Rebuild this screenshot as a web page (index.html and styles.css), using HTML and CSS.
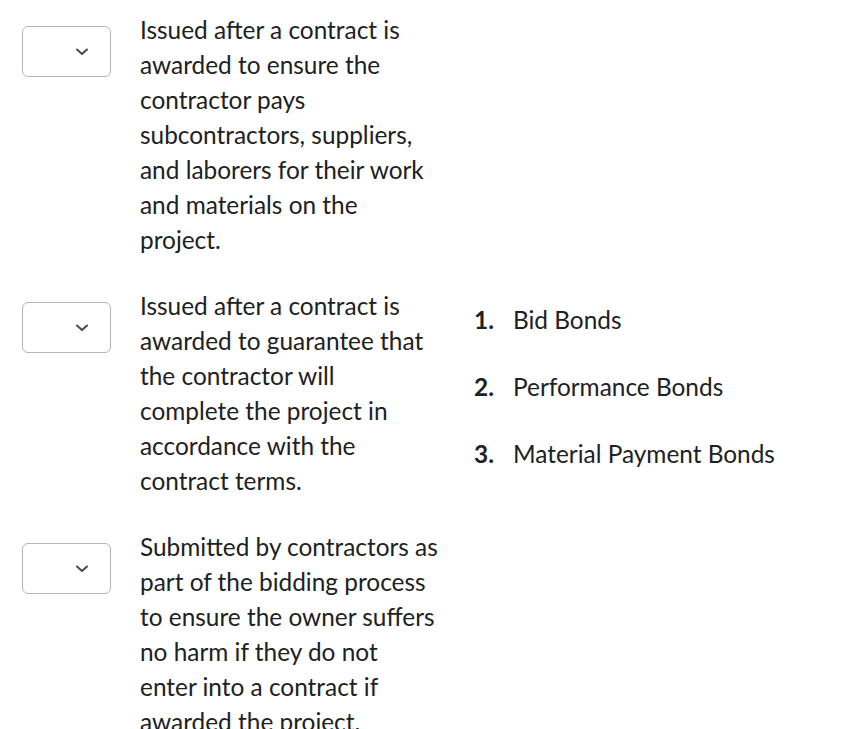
FILE: index.html
```html
<!DOCTYPE html>
<html>
<head>
<meta charset="utf-8">
<link rel="stylesheet" href="styles.css">
</head>
<body>
<div class="question">
  <div class="pairs">
    <div class="pair">
      <div class="select"><svg class="chev" width="12" height="8" viewBox="0 0 12 8"><path d="M1 1.5 L6 6 L11 1.5" fill="none" stroke="#494c4e" stroke-width="2" stroke-linecap="round" stroke-linejoin="round"/></svg></div>
      <p class="prompt">Issued after a contract is awarded to ensure the contractor pays subcontractors, suppliers, and laborers for their work and materials on the project.</p>
    </div>
    <div class="pair">
      <div class="select"><svg class="chev" width="12" height="8" viewBox="0 0 12 8"><path d="M1 1.5 L6 6 L11 1.5" fill="none" stroke="#494c4e" stroke-width="2" stroke-linecap="round" stroke-linejoin="round"/></svg></div>
      <p class="prompt">Issued after a contract is awarded to guarantee that the contractor will complete the project in accordance with the contract terms.</p>
    </div>
    <div class="pair">
      <div class="select"><svg class="chev" width="12" height="8" viewBox="0 0 12 8"><path d="M1 1.5 L6 6 L11 1.5" fill="none" stroke="#494c4e" stroke-width="2" stroke-linecap="round" stroke-linejoin="round"/></svg></div>
      <p class="prompt">Submitted by contractors as part of the bidding process to ensure the owner suffers no harm if they do not enter into a contract if awarded the project.</p>
    </div>
  </div>
  <ol class="choices">
    <li><span class="num">1.</span><span>Bid Bonds</span></li>
    <li><span class="num">2.</span><span>Performance Bonds</span></li>
    <li><span class="num">3.</span><span>Material Payment Bonds</span></li>
  </ol>
</div>
</body>
</html>
```
FILE: styles.css
```css
html, body {
  margin: 0;
  padding: 0;
  background: #ffffff;
}
body {
  font-family: Lato, "Open Sans", sans-serif;
  color: #202122;
  font-size: 24.4px;
}
.question {
  display: flex;
  padding: 12px 0 0 22px;
}
.pairs {
  display: flex;
  flex-direction: column;
  gap: 31px;
}
.pair {
  display: flex;
  align-items: flex-start;
}
.select {
  box-sizing: border-box;
  width: 89px;
  height: 51px;
  margin-top: 14px;
  border: 1px solid #b4b6b8;
  border-radius: 6px;
  display: flex;
  align-items: center;
  justify-content: flex-end;
  padding-right: 22px;
}
.chev {
  display: block;
}
.prompt {
  margin: 0 0 0 29px;
  width: 298px;
  line-height: 35px;
}
.choices {
  list-style: none;
  margin: 290px 0 0 36px;
  padding: 0;
  display: flex;
  flex-direction: column;
  gap: 32px;
}
.choices li {
  display: flex;
  line-height: 35px;
}
.num {
  font-weight: 700;
  width: 39px;
}
```
